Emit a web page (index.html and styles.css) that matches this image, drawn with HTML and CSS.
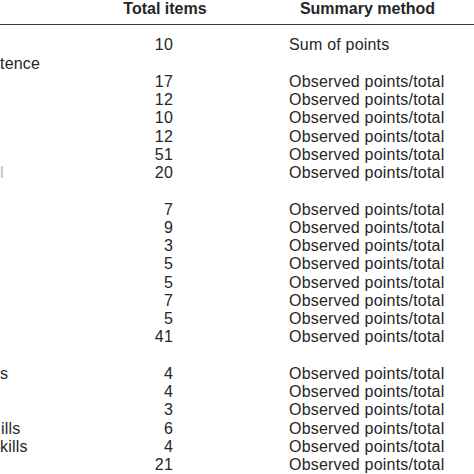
FILE: index.html
```html
<!DOCTYPE html>
<html>
<head>
<meta charset="utf-8">
<link rel="stylesheet" href="styles.css">
</head>
<body>
<div class="table">
  <div class="row head">
    <div class="lab"></div>
    <div class="num">Total items</div>
    <div class="meth">Summary method</div>
  </div>
  <div class="body">
    <div class="row"><div class="lab"></div><div class="num">10</div><div class="meth">Sum of points</div></div>
    <div class="row"><div class="lab">tence</div><div class="num"></div><div class="meth"></div></div>
    <div class="row"><div class="lab"></div><div class="num">17</div><div class="meth">Observed points/total</div></div>
    <div class="row"><div class="lab"></div><div class="num">12</div><div class="meth">Observed points/total</div></div>
    <div class="row"><div class="lab"></div><div class="num">10</div><div class="meth">Observed points/total</div></div>
    <div class="row"><div class="lab"></div><div class="num">12</div><div class="meth">Observed points/total</div></div>
    <div class="row"><div class="lab"></div><div class="num">51</div><div class="meth">Observed points/total</div></div>
    <div class="row"><div class="lab faint">l</div><div class="num">20</div><div class="meth">Observed points/total</div></div>
    <div class="row"><div class="lab"></div><div class="num"></div><div class="meth"></div></div>
    <div class="row"><div class="lab"></div><div class="num">7</div><div class="meth">Observed points/total</div></div>
    <div class="row"><div class="lab"></div><div class="num">9</div><div class="meth">Observed points/total</div></div>
    <div class="row"><div class="lab"></div><div class="num">3</div><div class="meth">Observed points/total</div></div>
    <div class="row"><div class="lab"></div><div class="num">5</div><div class="meth">Observed points/total</div></div>
    <div class="row"><div class="lab"></div><div class="num">5</div><div class="meth">Observed points/total</div></div>
    <div class="row"><div class="lab"></div><div class="num">7</div><div class="meth">Observed points/total</div></div>
    <div class="row"><div class="lab"></div><div class="num">5</div><div class="meth">Observed points/total</div></div>
    <div class="row"><div class="lab"></div><div class="num">41</div><div class="meth">Observed points/total</div></div>
    <div class="row"><div class="lab"></div><div class="num"></div><div class="meth"></div></div>
    <div class="row"><div class="lab">s</div><div class="num">4</div><div class="meth">Observed points/total</div></div>
    <div class="row"><div class="lab"></div><div class="num">4</div><div class="meth">Observed points/total</div></div>
    <div class="row"><div class="lab"></div><div class="num">3</div><div class="meth">Observed points/total</div></div>
    <div class="row"><div class="lab ind">ills</div><div class="num">6</div><div class="meth">Observed points/total</div></div>
    <div class="row"><div class="lab">kills</div><div class="num">4</div><div class="meth">Observed points/total</div></div>
    <div class="row"><div class="lab"></div><div class="num">21</div><div class="meth">Observed points/total</div></div>
  </div>
</div>
</body>
</html>
```
FILE: styles.css
```css
html, body {
  margin: 0;
  padding: 0;
  background: #ffffff;
  overflow: hidden;
}
body {
  font-family: "Liberation Sans", Arial, Helvetica, sans-serif;
  font-size: 16px;
  line-height: 18.25px;
  color: #262626;
}
.table {
  width: 100%;
}
.row {
  display: grid;
  grid-template-columns: 100px 130px 59px 157px 1fr;
  height: 18.25px;
  white-space: nowrap;
  letter-spacing: 0.2px;
}
.lab {
  text-align: left;
}
.faint {
  color: #b8b8b8;
}
.ind {
  padding-left: 1px;
}
.num {
  text-align: right;
  padding-right: 57px;
}
.meth {
  grid-column: 4;
}
.head {
  font-weight: bold;
  letter-spacing: 0;
  height: auto;
  line-height: 18px;
  padding-bottom: 5.6px;
  border-bottom: 1px solid #3a3a3a;
}
.head .num {
  text-align: center;
  padding-right: 0;
}
.head .meth {
  text-align: center;
}
.body {
  padding-top: 11.75px;
}
```
